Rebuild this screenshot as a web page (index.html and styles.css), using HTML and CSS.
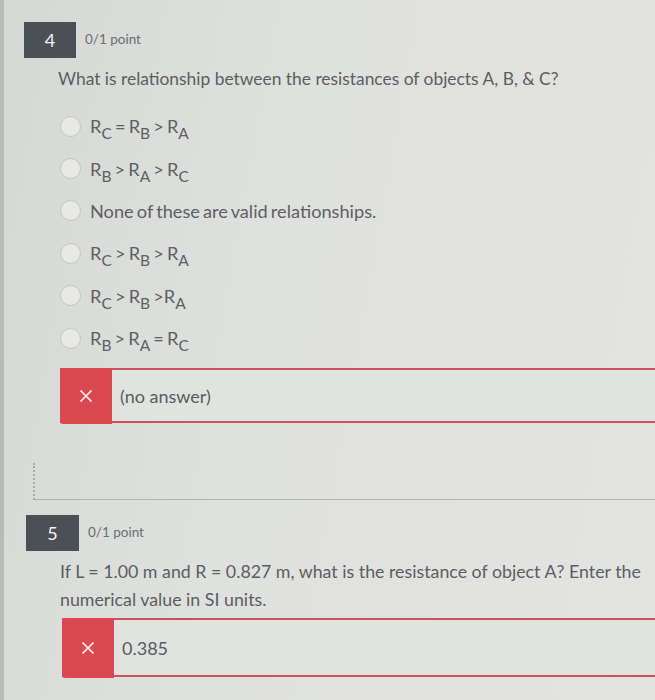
FILE: index.html
```html
<!DOCTYPE html>
<html>
<head>
<meta charset="utf-8">
<link rel="stylesheet" href="styles.css">
</head>
<body>
<div class="page">
  <section class="q q4">
    <div class="q-head">
      <div class="badge">4</div>
      <div class="points">0/1 point</div>
    </div>
    <p class="prompt">What is relationship between the resistances of objects A, B, &amp; C?</p>
    <ul class="options">
      <li><span class="radio"></span><span class="opt">R<sub>C</sub> = R<sub>B</sub> &gt; R<sub>A</sub></span></li>
      <li><span class="radio"></span><span class="opt">R<sub>B</sub> &gt; R<sub>A</sub> &gt; R<sub>C</sub></span></li>
      <li><span class="radio"></span><span class="opt">None of these are valid relationships.</span></li>
      <li><span class="radio"></span><span class="opt">R<sub>C</sub> &gt; R<sub>B</sub> &gt; R<sub>A</sub></span></li>
      <li><span class="radio"></span><span class="opt">R<sub>C</sub> &gt; R<sub>B</sub> &gt;R<sub>A</sub></span></li>
      <li><span class="radio"></span><span class="opt">R<sub>B</sub> &gt; R<sub>A</sub> = R<sub>C</sub></span></li>
    </ul>
    <div class="answer">
      <div class="mark"><svg width="14" height="14" viewBox="0 0 14 14"><path d="M1.5 1.5 L12.5 12.5 M12.5 1.5 L1.5 12.5" stroke="#f7eeee" stroke-width="1.7" fill="none"/></svg></div>
      <div class="value">(no answer)</div>
    </div>
  </section>
  <div class="spacer-box"></div>
  <section class="q q5">
    <div class="q-head">
      <div class="badge">5</div>
      <div class="points">0/1 point</div>
    </div>
    <p class="prompt prompt5">If L = 1.00 m and R = 0.827 m, what is the resistance of object A? Enter the numerical value in SI units.</p>
    <div class="answer answer5">
      <div class="mark"><svg width="14" height="14" viewBox="0 0 14 14"><path d="M1.5 1.5 L12.5 12.5 M12.5 1.5 L1.5 12.5" stroke="#f7eeee" stroke-width="1.7" fill="none"/></svg></div>
      <div class="value">0.385</div>
    </div>
  </section>
</div>
</body>
</html>
```
FILE: styles.css
```css
html, body {
  margin: 0;
  padding: 0;
}
body {
  width: 655px;
  height: 700px;
  overflow: hidden;
  background: linear-gradient(100deg, #d6d8d5 0%, #dfe1de 40%, #e3e4e1 100%);
  font-family: Lato, "Open Sans", sans-serif;
  color: #5b5e61;
}
.page {
  padding-top: 22px;
  border-left: 4px solid #b9bbb8;
  height: 700px;
  box-sizing: border-box;
}
.q-head {
  display: flex;
  align-items: center;
  padding-left: 20px;
}
.badge {
  width: 52px;
  height: 36px;
  background: #4b5057;
  color: #f2f2f2;
  font-size: 18px;
  display: flex;
  align-items: center;
  justify-content: center;
  box-sizing: border-box;
}
.points {
  margin-left: 9px;
  margin-top: -3px;
  font-size: 13.5px;
  color: #6a6d70;
}
.prompt {
  margin: 7px 0 0 54px;
  font-size: 17.4px;
  line-height: 28px;
  color: #5b5e61;
}
.options {
  list-style: none;
  margin: 12px 0 0 53px;
  padding: 0;
}
.options li {
  display: flex;
  align-items: center;
  height: 42.4px;
}
.radio {
  width: 21px;
  height: 21px;
  border: 1.5px solid #c3c5c4;
  border-radius: 50%;
  background: #e8e9e7;
  box-sizing: border-box;
  margin-left: 3px;
}
.opt {
  margin-left: 9px;
  font-size: 18.2px;
  color: #5d6063;
  word-spacing: -1.5px;
}
.opt sub {
  font-size: 15.5px;
  vertical-align: -6px;
  line-height: 0;
}
.answer {
  display: flex;
  margin: 9px 0 0 56px;
  height: 51px;
  border-top: 2.5px solid #c9525b;
  border-bottom: 2.5px solid #c9525b;
  background: #e1e3e0;
}
.mark {
  width: 52px;
  background: #d9474f;
  display: flex;
  align-items: center;
  justify-content: center;
  margin: -2.5px 0;
  border-radius: 3px 0 0 3px;
}
.mark svg {
  display: block;
}
.value {
  display: flex;
  align-items: center;
  padding-left: 8px;
  font-size: 18px;
  color: #585b5e;
}
.spacer-box {
  margin: 40px 0 0 29px;
  height: 36px;
  border-left: 2px dotted #a9aba9;
  border-bottom: 1.5px solid #b3b5b3;
}
.q5 {
  margin-top: 15px;
}
.q5 .q-head {
  padding-left: 22px;
}
.q5 .badge {
  width: 53px;
}
.prompt5 {
  margin: 6px 0 0 56px;
  font-size: 17.8px;
  padding-right: 6px;
}
.answer5 {
  margin-top: 5px;
  margin-left: 58px;
  height: 55px;
}
```
